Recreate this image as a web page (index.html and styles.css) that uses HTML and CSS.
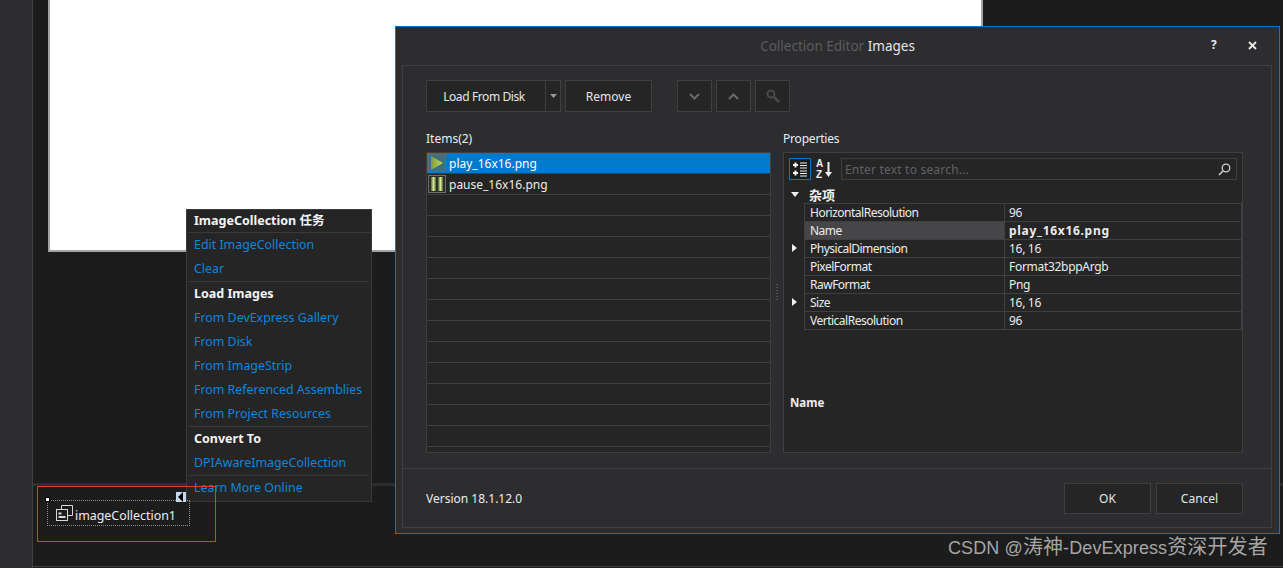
FILE: index.html
```html
<!DOCTYPE html>
<html lang="en">
<head>
  <meta charset="UTF-8" />
  <title>Collection Editor Images</title>
  <link rel="stylesheet" href="styles.css">
</head>
<body>
  <div class="desktop">
    <div class="side-strip"></div>
    <div class="form-surface"></div>
    <div class="tray-line"></div>
    <div class="bottom-line"></div>

    <div class="smart-panel">
      <div class="smart-title">ImageCollection 任务</div>
      <a class="smart-link">Edit ImageCollection</a>
      <a class="smart-link">Clear</a>
      <div class="smart-head">Load Images</div>
      <a class="smart-link">From DevExpress Gallery</a>
      <a class="smart-link">From Disk</a>
      <a class="smart-link">From ImageStrip</a>
      <a class="smart-link">From Referenced Assemblies</a>
      <a class="smart-link">From Project Resources</a>
      <div class="smart-head">Convert To</div>
      <a class="smart-link">DPIAwareImageCollection</a>
      <a class="smart-link smart-last">Learn More Online</a>
    </div>

    <div class="red-mark"></div>
    <div class="component">
      <span class="grip"></span>
      <span class="smart-tag"><svg width="8" height="10" viewBox="0 0 8 10"><path d="M6 0v10L1 5z" fill="#000"/></svg></span>
      <svg class="component-icon" width="17" height="16" viewBox="0 0 17 16" fill="none" stroke="#d8d8d8">
        <path d="M5.500 4V.5h11v10H12"/>
        <rect x=".5" y="4.500" width="11" height="11"/>
        <path d="M2.500 8.500h3M2.500 12h7" stroke-width="2"/>
      </svg>
      <span class="component-name">imageCollection1</span>
    </div>

    <div class="dialog">
      <div class="dialog-title">
        <span class="title-text"><span class="title-dim">Collection Editor</span> Images</span>
        <span class="title-help">?</span>
        <svg class="title-close" width="9" height="9" viewBox="0 0 9 9"><path d="M1 1l7 7M8 1L1 8" stroke="#e8e8e8" stroke-width="1.800"/></svg>
      </div>
      <div class="frame">
        <div class="frame-body">
          <div class="toolbar">
            <button class="btn btn-load">Load From Disk</button>
            <button class="btn btn-drop"><svg width="7" height="4" viewBox="0 0 7 4"><path d="M0 0h7L3.500 4z" fill="#999"/></svg></button>
            <button class="btn btn-remove">Remove</button>
            <button class="btn btn-icon"><svg width="11" height="7" viewBox="0 0 11 7" fill="none"><path d="M1 1l4.500 4.500L10 1" stroke="#6a6a6a" stroke-width="2"/></svg></button>
            <button class="btn btn-icon btn-tight"><svg width="11" height="7" viewBox="0 0 11 7" fill="none"><path d="M1 6l4.500-4.500L10 6" stroke="#6a6a6a" stroke-width="2"/></svg></button>
            <button class="btn btn-icon btn-tight"><svg width="14" height="14" viewBox="0 0 14 14" fill="none"><circle cx="5" cy="5" r="3.500" stroke="#4a4a4c" stroke-width="2"/><path d="M8 8l5 5" stroke="#4a4a4c" stroke-width="2.500"/></svg></button>
          </div>

          <div class="columns">
            <div class="col-items">
              <div class="col-label">Items(2)</div>
              <div class="items-list">
                <div class="item item-selected">
                  <svg class="thumb" width="18" height="18" viewBox="0 0 18 18">
                    <defs><linearGradient id="playFill" x1="0" y1="0" x2="1" y2="0"><stop offset="0" stop-color="#7d9b3a"/><stop offset="1" stop-color="#c3dc62"/></linearGradient></defs>
                    <rect x=".5" y=".5" width="17" height="17" fill="#3a6f86" stroke="#5d6f76"/>
                    <path d="M3 2l12 7-12 7z" fill="url(#playFill)"/>
                  </svg>
                  play_16x16.png
                </div>
                <div class="item">
                  <svg class="thumb" width="18" height="18" viewBox="0 0 18 18">
                    <defs><linearGradient id="pauseFill" x1="0" y1="0" x2="1" y2="0"><stop offset="0" stop-color="#4f6b24"/><stop offset=".5" stop-color="#d4e69a"/><stop offset="1" stop-color="#4f6b24"/></linearGradient></defs>
                    <rect x=".5" y=".5" width="17" height="17" fill="#2b2b2b" stroke="#6e6e6e"/>
                    <rect x="3" y="2" width="5" height="14" fill="url(#pauseFill)"/>
                    <rect x="10" y="2" width="5" height="14" fill="url(#pauseFill)"/>
                  </svg>
                  pause_16x16.png
                </div>
                <div class="item"></div><div class="item"></div><div class="item"></div>
                <div class="item"></div><div class="item"></div><div class="item"></div>
                <div class="item"></div><div class="item"></div><div class="item"></div>
                <div class="item"></div><div class="item"></div><div class="item"></div>
              </div>
            </div>

            <div class="splitter"></div>

            <div class="col-props">
              <div class="col-label col-label-props">Properties</div>
              <div class="props-panel">
                <div class="props-tools">
                  <span class="tool-on">
                    <svg width="16" height="16" viewBox="0 0 16 16" fill="none" stroke="#f0f0f0">
                      <path d="M1 4h5M3.500 1.500v5M1 12h5M3.500 9.500v5" stroke-width="2"/>
                      <path d="M8 2h7M8 4.500h7M8 7h7M8 10h7M8 12.500h7M8 15h7"/>
                    </svg>
                  </span>
                  <span class="tool-az">
                    <span class="az-letters">A<br>Z</span>
                    <svg width="7" height="15" viewBox="0 0 7 15"><path d="M2.500 0h2v10H7l-3.500 5L0 10h2.500z" fill="#f0f0f0"/></svg>
                  </span>
                  <div class="search-box">
                    <span class="search-hint">Enter text to search...</span>
                    <svg width="13" height="13" viewBox="0 0 13 13" fill="none" stroke="#d0d0d0"><circle cx="8" cy="5" r="3.800" stroke-width="1.300"/><path d="M5 8l-4 4" stroke-width="1.600"/></svg>
                  </div>
                </div>
                <div class="prop-category"><span class="caret-down"></span><span>杂项</span></div>
                <div class="prop-table">
                  <div class="prop-row"><span class="gutter"></span><span class="prop-name">HorizontalResolution</span><span class="prop-value">96</span></div>
                  <div class="prop-row prop-active"><span class="gutter"></span><span class="prop-name">Name</span><span class="prop-value">play_16x16.png</span></div>
                  <div class="prop-row"><span class="gutter"><i class="caret-right"></i></span><span class="prop-name">PhysicalDimension</span><span class="prop-value">16, 16</span></div>
                  <div class="prop-row"><span class="gutter"></span><span class="prop-name">PixelFormat</span><span class="prop-value">Format32bppArgb</span></div>
                  <div class="prop-row"><span class="gutter"></span><span class="prop-name">RawFormat</span><span class="prop-value">Png</span></div>
                  <div class="prop-row"><span class="gutter"><i class="caret-right"></i></span><span class="prop-name">Size</span><span class="prop-value">16, 16</span></div>
                  <div class="prop-row prop-end"><span class="gutter"></span><span class="prop-name">VerticalResolution</span><span class="prop-value">96</span></div>
                </div>
                <div class="prop-desc">Name</div>
              </div>
            </div>
          </div>
        </div>

        <div class="frame-foot">
          <span class="version">Version 18.1.12.0</span>
          <div class="foot-btns">
            <button class="btn btn-foot">OK</button>
            <button class="btn btn-foot">Cancel</button>
          </div>
        </div>
      </div>
    </div>

    <div class="watermark">CSDN @<span class="wm-cjk">涛神</span>-DevExpress<span class="wm-cjk">资深开发者</span></div>
  </div>
</body>
</html>
```

FILE: styles.css
```css
html, body {
  margin: 0;
  padding: 0;
  overflow: hidden;
}
body {
  font-family: "Noto Sans", "Noto Sans CJK SC", sans-serif;
  font-size: 12px;
  color: #ececec;
  background-color: #1c1c1c;
}
.desktop {
  position: relative;
  width: 1283px;
  height: 568px;
  overflow: hidden;
}
.side-strip {
  position: absolute;
  left: 0;
  top: 0;
  width: 32px;
  height: 568px;
  background-color: #2d2d30;
  border-right: 1px solid #3f3f46;
}
.form-surface {
  position: absolute;
  left: 48px;
  top: -2px;
  width: 931px;
  height: 250px;
  background: white;
  border: 2px solid #a3a3a3;
}
.tray-line {
  position: absolute;
  left: 33px;
  right: 0;
  top: 483px;
  height: 3px;
  background-color: #2d2d30;
}
.bottom-line {
  position: absolute;
  left: 33px;
  right: 0;
  top: 566px;
  height: 1px;
  background-color: #3f3f46;
}

/* smart tag panel */
.smart-panel {
  position: absolute;
  left: 186px;
  top: 209px;
  width: 186px;
  height: 293px;
  box-sizing: border-box;
  background-color: #252526;
  border: 1px solid #3a3a3d;
  padding: 0 2px;
}
.smart-title {
  height: 22px;
  line-height: 21px;
  margin: 0 -1px;
  padding-left: 6px;
  font-weight: bold;
  font-size: 12.5px;
  color: #f4f4f4;
  border-bottom: 1px solid #3a3a3d;
}
.smart-head {
  height: 24px;
  line-height: 23px;
  padding-left: 5px;
  font-weight: bold;
  font-size: 12.5px;
  color: #f4f4f4;
  border-top: 1px solid #3a3a3d;
}
.smart-link {
  display: block;
  height: 24px;
  line-height: 24px;
  padding-left: 5px;
  font-size: 12.4px;
  color: #0e86dc;
  white-space: nowrap;
}
.smart-last {
  border-top: 1px solid #3a3a3d;
}

/* component tray */
.red-mark {
  position: absolute;
  left: 37px;
  top: 486px;
  width: 177px;
  height: 54px;
  border: 1px solid #e53935;
}
.component {
  position: absolute;
  left: 47px;
  top: 500px;
  width: 143px;
  height: 26px;
  box-sizing: border-box;
  border: 1px dotted #8a8a8a;
  display: flex;
  align-items: center;
  gap: 2px;
  padding-left: 8px;
  font-size: 12.4px;
  color: #ececec;
}
.component-name {
  padding-top: 4px;
}
.grip {
  position: absolute;
  left: -3px;
  top: -4px;
  width: 3px;
  height: 3px;
  background: white;
  border: 1px solid black;
}
.smart-tag {
  position: absolute;
  right: 3px;
  top: -9px;
  width: 10px;
  height: 10px;
  background-color: #c6d9ea;
  display: flex;
  align-items: center;
  justify-content: center;
}
.component-icon {
  flex: none;
  margin-top: -1px;
}

/* dialog */
.dialog {
  position: absolute;
  left: 395px;
  top: 26px;
  width: 885px;
  height: 508px;
  box-sizing: border-box;
  background-color: #2d2d30;
  border: 1px solid #007acc;
  display: flex;
  flex-direction: column;
}
.dialog-title {
  position: relative;
  height: 38px;
  flex: none;
  display: flex;
  align-items: center;
  justify-content: center;
  box-sizing: border-box;
}
.title-text {
  font-size: 13.5px;
  color: #e6e6e6;
}
.title-dim {
  color: #5c5c5e;
}
.title-help {
  position: absolute;
  left: 815px;
  top: 9px;
  font-weight: bold;
  font-size: 12px;
}
.title-close {
  position: absolute;
  left: 852px;
  top: 14px;
}
.frame {
  flex: 1;
  margin: 0 7px 5px 6px;
  border: 1px solid #3f3f42;
  display: flex;
  flex-direction: column;
  min-height: 0;
}
.frame-body {
  flex: 1;
  padding: 14px 28px 0 23px;
  min-height: 0;
}
.toolbar {
  display: flex;
  height: 32px;
}
.btn {
  box-sizing: border-box;
  height: 32px;
  background-color: #252526;
  border: 1px solid #3f3f42;
  color: #e6e6e6;
  font-family: inherit;
  font-size: 12px;
  padding: 0;
  display: flex;
  align-items: center;
  justify-content: center;
}
.btn-load {
  width: 119px;
  border-right: none;
  letter-spacing: -0.4px;
  padding-right: 4px;
}
.btn-drop {
  width: 16px;
}
.btn-remove {
  width: 87px;
  margin-left: 4px;
}
.btn-icon {
  width: 35px;
  margin-left: 25px;
}
.btn-tight {
  margin-left: 4px;
}
.columns {
  display: flex;
  margin-top: 18px;
}
.col-label {
  height: 22px;
  line-height: 18px;
  font-size: 12px;
}
.col-label-props {
  letter-spacing: -0.2px;
}
.col-items {
  width: 345px;
}
.splitter {
  width: 4px;
  height: 18px;
  flex: none;
  margin: 153px 4px 0;
  background: radial-gradient(#55555a 0.6px, transparent 0.7px);
  background-size: 4px 3px;
}
.col-props {
  width: 460px;
}
.items-list {
  box-sizing: border-box;
  height: 301px;
  background-color: #252526;
  border: 1px solid #3f3f42;
  overflow: hidden;
}
.item {
  box-sizing: border-box;
  height: 21px;
  border-bottom: 1px solid #3f3f42;
  display: flex;
  align-items: center;
  gap: 3px;
  padding-left: 1px;
  white-space: nowrap;
}
.item-selected {
  height: 20px;
  background-color: #007acc;
  border-bottom: none;
  margin-bottom: 1px;
  box-shadow: 0 1px 0 #3f3f42;
  color: white;
}
.thumb {
  flex: none;
}
.props-panel {
  box-sizing: border-box;
  height: 301px;
  background-color: #252526;
  border: 1px solid #3f3f42;
  padding-top: 5px;
}
.props-tools {
  display: flex;
  align-items: center;
  height: 22px;
  padding: 0 5px;
}
.tool-on {
  box-sizing: border-box;
  width: 22px;
  height: 22px;
  border: 1px solid #007acc;
  background-color: #1c1c1c;
  display: flex;
  align-items: center;
  justify-content: center;
}
.tool-az {
  display: flex;
  align-items: center;
  width: 25px;
  margin-left: 5px;
  gap: 2px;
}
.az-letters {
  font-family: "Liberation Sans", sans-serif;
  font-size: 10px;
  font-weight: bold;
  line-height: 11.5px;
  color: #f0f0f0;
}
.search-box {
  box-sizing: border-box;
  flex: 1;
  height: 22px;
  background-color: #252526;
  border: 1px solid #3f3f42;
  display: flex;
  align-items: center;
  justify-content: space-between;
  padding: 0 5px 0 3px;
  color: #626264;
}
.search-hint {
  letter-spacing: 0.2px;
}
.prop-category {
  box-sizing: border-box;
  height: 23px;
  display: flex;
  align-items: center;
  gap: 10px;
  padding: 6px 0 0 7px;
  font-size: 13px;
  font-weight: bold;
  color: #f0f0f0;
}
.caret-down {
  width: 0;
  height: 0;
  border-left: 4.500px solid transparent;
  border-right: 4.500px solid transparent;
  border-top: 5px solid #f0f0f0;
}
.prop-row {
  display: flex;
  height: 18px;
  line-height: 17px;
}
.gutter {
  box-sizing: border-box;
  width: 20px;
  flex: none;
  display: flex;
  align-items: center;
  padding-left: 8px;
}
.caret-right {
  width: 0;
  height: 0;
  border-top: 4.500px solid transparent;
  border-bottom: 4.500px solid transparent;
  border-left: 5px solid #f0f0f0;
}
.prop-name, .prop-value {
  box-sizing: border-box;
  border-top: 1px solid #3f3f42;
  border-left: 1px solid #3f3f42;
  padding-left: 5px;
  white-space: nowrap;
}
.prop-name {
  width: 200px;
  letter-spacing: -0.5px;
}
.prop-value {
  flex: 1;
  padding-left: 4px;
  border-right: 1px solid #3f3f42;
  letter-spacing: -0.3px;
}
.prop-end .prop-name, .prop-end .prop-value {
  height: 19px;
  border-bottom: 1px solid #3f3f42;
}
.prop-active .prop-name {
  background-color: #464649;
}
.prop-active .prop-value {
  font-weight: bold;
  letter-spacing: 0.7px;
}
.prop-desc {
  margin-top: 65px;
  padding-left: 6px;
  line-height: 18px;
  font-size: 11.5px;
  font-weight: bold;
}
.frame-foot {
  flex: none;
  box-sizing: border-box;
  height: 59px;
  border-top: 1px solid #3f3f42;
  display: flex;
  align-items: center;
  justify-content: space-between;
  padding: 1px 28px 0 23px;
}
.foot-btns {
  display: flex;
  gap: 5px;
}
.btn-foot {
  width: 87px;
  height: 31px;
}
.watermark {
  position: absolute;
  left: 948px;
  top: 534px;
  font-family: "Liberation Sans", "Noto Sans CJK SC", sans-serif;
  font-size: 18px;
  line-height: 26px;
  letter-spacing: 0.1px;
  color: #a6a6a6;
  white-space: nowrap;
}
.wm-cjk {
  font-size: 20px;
}
```
